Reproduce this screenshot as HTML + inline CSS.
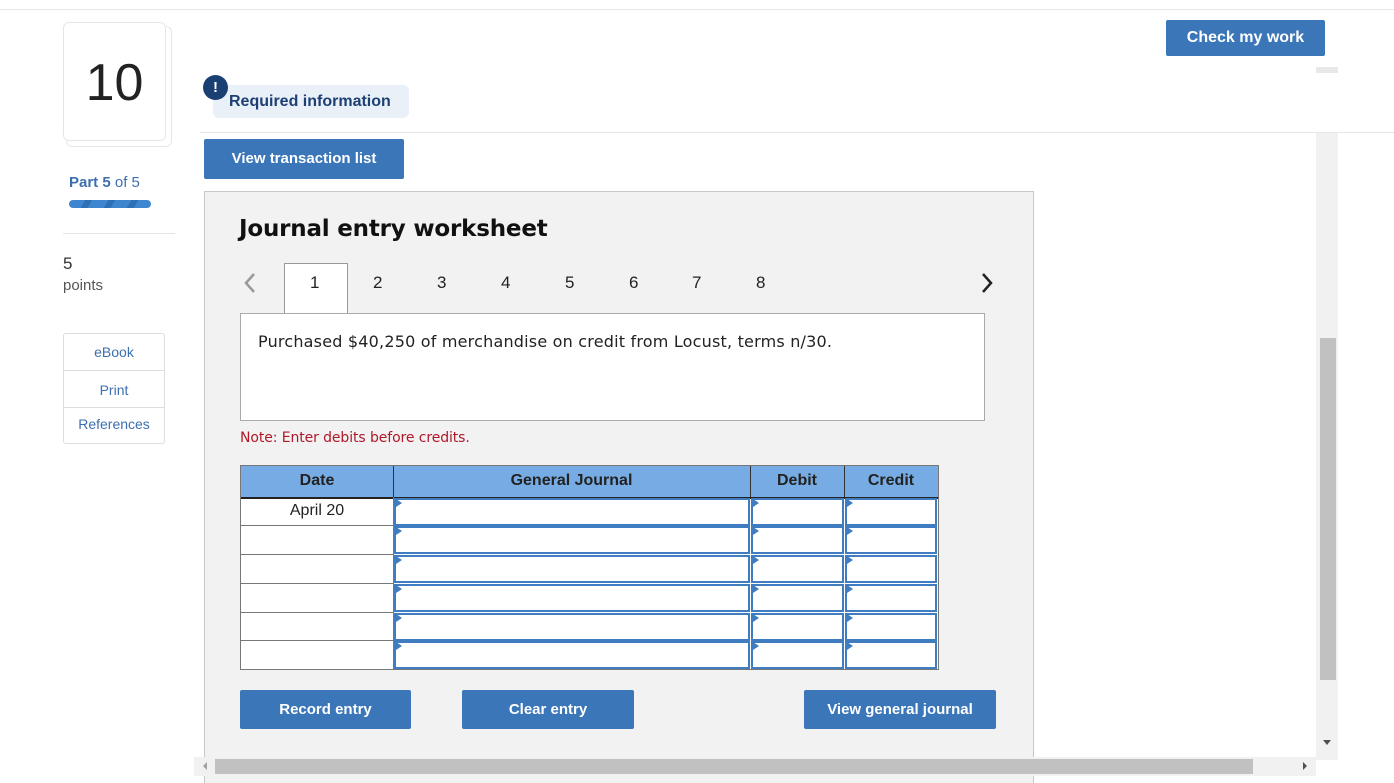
<!DOCTYPE html>
<html><head><style>
html,body{margin:0;width:1394px;height:783px;overflow:hidden}
body{background:#fff;font-family:"Liberation Sans",Arial,sans-serif;position:relative}
.a{position:absolute}
.btn{position:absolute;background:#3a76b8;color:#fff;font-weight:bold;font-size:15px;text-align:center;border-radius:2px}
.in{position:absolute;background:#fff;border:2px solid #3f7cc0;box-sizing:border-box}
.in:before{content:"";position:absolute;left:0;border-left:6px solid #3f7cc0;border-top:4px solid transparent;border-bottom:4px solid transparent;top:-1px}
</style></head><body>
<div class="a" style="left:0;top:9px;width:1394px;height:1px;background:#e8e8e8"></div>
<div class="a" style="left:66px;top:26px;width:104px;height:119px;border:1px solid #e6e6e6;border-radius:6px"></div>
<div class="a" style="left:63px;top:22px;width:101px;height:117px;border:1px solid #e6e6e6;border-radius:6px;background:#fff;font-size:52px;color:#222;text-align:center;line-height:120px">10</div>
<div class="a" style="left:69px;top:174px;font-size:15px;color:#3d6fb0"><b>Part 5</b> of 5</div>
<div class="a" style="left:69px;top:200px;width:82px;height:8px;border-radius:4px;background:repeating-linear-gradient(120deg,#3f86d0 0 14px,#2f6fb5 14px 20px)"></div>
<div class="a" style="left:63px;top:233px;width:112px;height:1px;background:#e3e3e3"></div>
<div class="a" style="left:63px;top:254px;font-size:17px;color:#333">5</div>
<div class="a" style="left:63px;top:277px;font-size:15px;color:#555">points</div>
<div class="a" style="left:63px;top:333px;width:100px;height:109px;border:1px solid #ddd;border-radius:3px;font-size:14px;color:#3d6fb0;text-align:center">
<div style="height:36px;line-height:36px;border-bottom:1px solid #ddd">eBook</div>
<div style="height:36px;line-height:38px;border-bottom:1px solid #ddd">Print</div>
<div style="line-height:32px">References</div></div>
<div class="btn" style="left:1166px;top:20px;width:159px;height:36px;line-height:36px;font-size:16px">Check my work</div>
<div class="a" style="left:1316px;top:67px;width:22px;height:6px;background:#e8e8e8"></div>
<div class="a" style="left:213px;top:85px;width:196px;height:33px;background:#e9f0f8;border-radius:6px"></div>
<div class="a" style="left:229px;top:93px;font-size:16px;font-weight:bold;color:#1d3f73">Required information</div>
<div class="a" style="left:203px;top:75px;width:25px;height:25px;border-radius:50%;background:#1a3f73;color:#fff;font-weight:bold;font-size:15px;text-align:center;line-height:25px">!</div>
<div class="a" style="left:200px;top:132px;width:1194px;height:1px;background:#e6e6e6"></div>
<div class="btn" style="left:204px;top:139px;width:200px;height:40px;line-height:40px">View transaction list</div>
<div class="a" style="left:1316px;top:133px;width:22px;height:627px;background:#f1f1f1"></div>
<div class="a" style="left:1320px;top:338px;width:16px;height:342px;background:#c1c1c1"></div>
<div class="a" style="left:1323px;top:740px;border-top:5px solid #505050;border-left:4px solid transparent;border-right:4px solid transparent"></div>
<div class="a" style="left:204px;top:191px;width:828px;height:600px;background:#f2f2f2;border:1px solid #c8c8c8"></div>
<div class="a" style="left:239px;top:216px;font-size:23px;font-weight:bold;color:#111;font-family:'DejaVu Sans',sans-serif;letter-spacing:-0.2px">Journal entry worksheet</div>
<svg class="a" style="left:243px;top:272px" width="14" height="22"><path d="M11 2 L3 11 L11 20" fill="none" stroke="#999" stroke-width="2.5"/></svg>
<svg class="a" style="left:980px;top:272px" width="14" height="22"><path d="M3 2 L11 11 L3 20" fill="none" stroke="#222" stroke-width="2.5"/></svg>
<div class="a" style="left:284px;top:263px;width:62px;height:52px;background:#fff;border:1px solid #999;border-bottom:none"></div>
<div class="a" style="left:240px;top:273px;font-size:17px;color:#222">
<span class="a" style="left:70px">1</span><span class="a" style="left:133px">2</span><span class="a" style="left:197px">3</span><span class="a" style="left:261px">4</span><span class="a" style="left:325px">5</span><span class="a" style="left:389px">6</span><span class="a" style="left:452px">7</span><span class="a" style="left:516px">8</span></div>
<div class="a" style="left:240px;top:313px;width:743px;height:106px;background:#fff;border:1px solid #aaa"></div>
<div class="a" style="left:258px;top:332px;font-size:16px;color:#222;font-family:'DejaVu Sans',sans-serif;letter-spacing:0.2px">Purchased $40,250 of merchandise on credit from Locust, terms n/30.</div>
<div class="a" style="left:240px;top:430px;font-size:14px;color:#b0182a;font-family:'DejaVu Sans',sans-serif;letter-spacing:-0.1px">Note: Enter debits before credits.</div>
<div class="a" style="left:240px;top:465px;width:697px;height:203px;border:1px solid #777;background:#fff"></div>
<div class="a" style="left:241px;top:466px;width:697px;height:31px;background:#76abe3;border-bottom:2px solid #222"></div>
<div class="a" style="left:241px;top:472px;font-size:16px;font-weight:bold;color:#222;width:697px">
<span class="a" style="left:0;width:152px;text-align:center">Date</span>
<span class="a" style="left:152px;width:357px;text-align:center">General Journal</span>
<span class="a" style="left:509px;width:94px;text-align:center">Debit</span>
<span class="a" style="left:603px;width:94px;text-align:center">Credit</span></div>
<div class="a" style="left:393px;top:466px;width:1px;height:31px;background:#333"></div>
<div class="a" style="left:750px;top:466px;width:1px;height:31px;background:#333"></div>
<div class="a" style="left:844px;top:466px;width:1px;height:31px;background:#333"></div>
<div class="a" style="left:393px;top:497px;width:1px;height:172px;background:#777"></div>
<div class="a" style="left:241px;top:502px;width:152px;text-align:center;font-size:16px;color:#222">April 20</div>
<div id="rows"></div>
<script>
var ys=[497,525,554,583,612,640],h="";
ys.forEach(function(y,i){
 if(i>0)h+='<div class="a" style="left:241px;top:'+y+'px;width:152px;height:1px;background:#777"></div>';
 h+='<div class="in" style="left:394px;top:'+(y+1)+'px;width:356px;height:28px"></div>';
 h+='<div class="in" style="left:751px;top:'+(y+1)+'px;width:93px;height:28px"></div>';
 h+='<div class="in" style="left:845px;top:'+(y+1)+'px;width:92px;height:28px"></div>';
});
document.getElementById('rows').innerHTML=h;
</script>
<div class="btn" style="left:240px;top:690px;width:171px;height:39px;line-height:39px">Record entry</div>
<div class="btn" style="left:462px;top:690px;width:172px;height:39px;line-height:39px">Clear entry</div>
<div class="btn" style="left:804px;top:690px;width:192px;height:39px;line-height:39px">View general journal</div>
<div class="a" style="left:194px;top:757px;width:1122px;height:19px;background:#f1f1f1"></div>
<div class="a" style="left:215px;top:759px;width:1038px;height:15px;background:#c1c1c1"></div>
<div class="a" style="left:203px;top:762px;border-right:4px solid #a0a0a0;border-top:4px solid transparent;border-bottom:4px solid transparent"></div>
<div class="a" style="left:1303px;top:762px;border-left:4px solid #505050;border-top:4px solid transparent;border-bottom:4px solid transparent"></div>
</body></html>
